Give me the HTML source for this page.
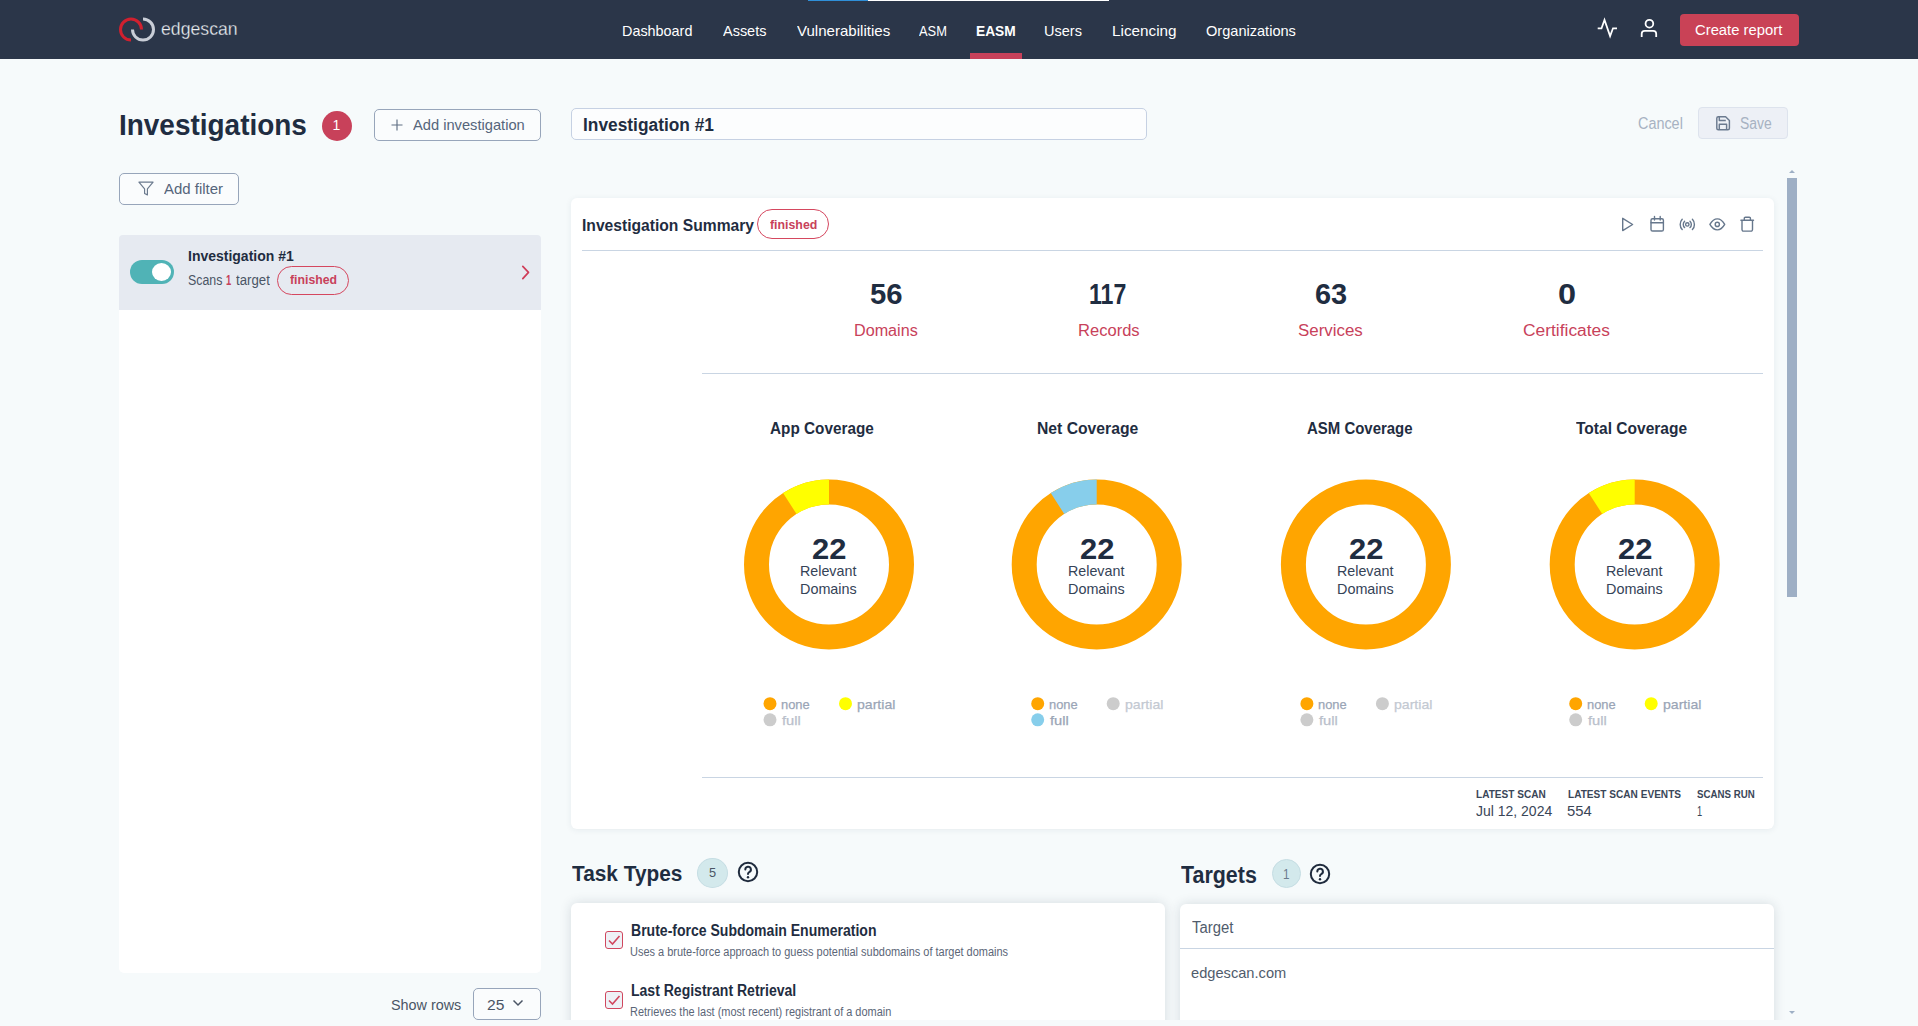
<!DOCTYPE html>
<html><head><meta charset="utf-8"><title>Investigations</title>
<style>
*{box-sizing:border-box;margin:0;padding:0}
html,body{width:1918px;height:1026px;overflow:hidden;background:#f6fafb;font-family:"Liberation Sans",sans-serif}
.a{position:absolute}
.t{position:absolute;white-space:nowrap;transform-origin:0 0;font-family:"Liberation Sans",sans-serif}
svg{position:absolute;overflow:visible}
</style></head><body>
<!-- header -->
<div class="a" style="left:0;top:0;width:1918px;height:59px;background:#2b3649"></div>
<div class="a" style="left:808px;top:0;width:60px;height:1px;background:#2f8fd8"></div>
<div class="a" style="left:868px;top:0;width:241px;height:1px;background:#ffffff"></div>
<div class="a" style="left:970px;top:53px;width:52px;height:6px;background:#c8415a"></div>
<svg style="left:0;top:0" width="200" height="59">
  <path d="M131 40.1 A10.5 10.5 0 1 1 141.5 29.6" fill="none" stroke="#d0202f" stroke-width="3"/>
  <path d="M143 19.1 A10.5 10.5 0 1 1 132.5 29.6" fill="none" stroke="#c9ced7" stroke-width="3"/>
</svg>
<svg style="left:0;top:0" width="1918" height="59">
  <polyline points="1597.7 28.3 1601.5 28.3 1604.5 19.9 1610.1 36.1 1613 28.3 1617 28.3" fill="none" stroke="#fff" stroke-width="1.75" stroke-linejoin="miter" stroke-miterlimit="6"/>
  <circle cx="1649.4" cy="23.7" r="3.85" fill="none" stroke="#fff" stroke-width="1.8"/>
  <path d="M1641.7 37V33.8a3 3 0 0 1 3-3H1653.2a3 3 0 0 1 3 3V37" fill="none" stroke="#fff" stroke-width="1.8"/>
</svg>
<div class="a" style="left:1680px;top:14px;width:119px;height:32px;background:#c94256;border-radius:4px"></div>

<!-- left column -->
<div class="a" style="left:322px;top:111px;width:30px;height:30px;border-radius:50%;background:#c8415a"></div>
<div class="a" style="left:374px;top:109px;width:167px;height:32px;border:1px solid #97a5ba;border-radius:5px;background:#fafcfd"></div>
<svg style="left:391px;top:119px" width="12" height="12"><path d="M6 0.5V11.5M0.5 6H11.5" stroke="#5f6e84" stroke-width="1.15"/></svg>
<div class="a" style="left:119px;top:173px;width:120px;height:32px;border:1px solid #97a5ba;border-radius:5px;background:#fafcfd"></div>
<svg style="left:136.7px;top:180px" width="18" height="17" viewBox="0 0 24 24"><polygon points="22 3 2 3 10 12.46 10 19 14 21 14 12.46 22 3" fill="none" stroke="#6b7a8e" stroke-width="1.65" stroke-linejoin="round"/></svg>
<div class="a" style="left:119px;top:310px;width:422px;height:663px;background:#fff;border-radius:0 0 5px 5px"></div>
<div class="a" style="left:119px;top:235px;width:422px;height:75px;background:#e6eaf1;border-radius:4px 4px 0 0"></div>
<div class="a" style="left:130px;top:260px;width:44px;height:24px;border-radius:12px;background:#50b3b6"></div>
<div class="a" style="left:152px;top:263px;width:19px;height:18px;border-radius:50%;background:#fff"></div>
<div class="a" style="left:277px;top:266px;width:72px;height:29px;border:1px solid #d5475f;border-radius:15px"></div>
<svg style="left:519px;top:264px" width="14" height="18"><polyline points="3.8 2.4 9.5 8.4 3.8 14.6" fill="none" stroke="#cf3d59" stroke-width="1.7" stroke-linecap="round" stroke-linejoin="round"/></svg>
<div class="a" style="left:473px;top:988px;width:68px;height:32px;border:1px solid #97a5ba;border-radius:5px;background:#fafcfd"></div>
<svg style="left:512px;top:998px" width="14" height="12"><polyline points="1.5 2.5 6 7 10.5 2.5" fill="none" stroke="#4a5565" stroke-width="1.5"/></svg>

<!-- right top -->
<div class="a" style="left:571px;top:108px;width:576px;height:32px;border:1px solid #c6d1e3;border-radius:5px;background:#fcfdfe"></div>
<div class="a" style="left:1698px;top:107px;width:90px;height:32px;border:1px solid #dde3ed;border-radius:4px;background:#edf0f6"></div>
<svg style="left:0;top:0" width="1918" height="150"><g fill="none" stroke="#6b7a8f" stroke-width="1.45" stroke-linejoin="round"><path d="M1716.8 118.3a1.5 1.5 0 0 1 1.5-1.5H1725.6L1729.4 120.6V128.2a1.5 1.5 0 0 1-1.5 1.5H1718.3a1.5 1.5 0 0 1-1.5-1.5Z"/><path d="M1719.3 116.8V120.4H1725.8M1719.3 129.7V124.3H1726.6V129.7"/></g></svg>
<!-- scrollbar -->
<div class="a" style="left:1787px;top:178px;width:10px;height:419px;background:#9eafc5"></div>
<svg style="left:1786px;top:168px" width="12" height="6"><polygon points="3 4.9 6 1.9 9 4.9" fill="#9eafc5"/></svg>
<svg style="left:1786px;top:1009px" width="12" height="6"><polygon points="3 2 6 5 9 2" fill="#9eafc5"/></svg>

<!-- summary card -->
<div class="a" style="left:571px;top:198px;width:1203px;height:631px;background:#fff;border-radius:6px;box-shadow:0 1px 6px rgba(40,60,90,0.08)"></div>
<div class="a" style="left:757px;top:209px;width:72px;height:30px;border:1px solid #d5475f;border-radius:15px"></div>
<div class="a" style="left:582px;top:250px;width:1181px;height:1px;background:#c9d5e3"></div>
<svg style="left:0;top:0" width="1918" height="300">
  <g fill="none" stroke="#66778c" stroke-width="1.4" stroke-linecap="round" stroke-linejoin="round">
    <path d="M1622.7 218.3V230.6L1632.6 224.5Z"/>
    <rect x="1651" y="218.7" width="12.4" height="12.3" rx="1.6"/><path d="M1651 222.8H1663.4M1654.5 216.5V220M1660.2 216.5V220"/>
    <circle cx="1687.3" cy="224.4" r="1.7"/>
    <path d="M1684.6 221.2A4.5 4.5 0 0 0 1684.6 227.6M1690 221.2A4.5 4.5 0 0 1 1690 227.6M1682.2 219.3A7.5 7.5 0 0 0 1682.2 229.5M1692.4 219.3A7.5 7.5 0 0 1 1692.4 229.5"/>
    <path d="M1709.9 224.4C1712 220.8 1714.5 218.9 1717.3 218.9C1720.1 218.9 1722.6 220.8 1724.7 224.4C1722.6 228 1720.1 229.9 1717.3 229.9C1714.5 229.9 1712 228 1709.9 224.4Z"/>
    <circle cx="1717.3" cy="224.4" r="2.1"/>
    <path d="M1740.9 220.2H1753.5M1744.3 220.2V218.3a1.1 1.1 0 0 1 1.1-1.1H1749.3a1.1 1.1 0 0 1 1.1 1.1V220.2M1742 220.2V229.6a1.5 1.5 0 0 0 1.5 1.5H1751a1.5 1.5 0 0 0 1.5-1.5V220.2"/>
  </g>
</svg>
<div class="a" style="left:702px;top:373px;width:1061px;height:1px;background:#c9d5e3"></div>
<svg style="left:0;top:0" width="1918" height="1026">
  <g fill="none" stroke-width="25">
    <circle cx="829" cy="564.5" r="72.5" stroke="#ffa500"/>
    <path d="M789.81 503.51 A72.5 72.5 0 0 1 829 492" stroke="#ffff00"/>
    <circle cx="1096.7" cy="564.5" r="72.5" stroke="#ffa500"/>
    <path d="M1057.51 503.51 A72.5 72.5 0 0 1 1096.7 492" stroke="#87ceeb"/>
    <circle cx="1365.9" cy="564.5" r="72.5" stroke="#ffa500"/>
    <circle cx="1634.7" cy="564.5" r="72.5" stroke="#ffa500"/>
    <path d="M1595.51 503.51 A72.5 72.5 0 0 1 1634.7 492" stroke="#ffff00"/>
  </g>
  <g>
    <circle cx="770" cy="703.7" r="6.5" fill="#ffa500"/><circle cx="845.5" cy="703.7" r="6.5" fill="#ffff00"/><circle cx="770" cy="719.8" r="6.5" fill="#cccccc"/>
    <circle cx="1037.7" cy="703.7" r="6.5" fill="#ffa500"/><circle cx="1113.2" cy="703.7" r="6.5" fill="#cccccc"/><circle cx="1037.7" cy="719.8" r="6.5" fill="#87ceeb"/>
    <circle cx="1306.9" cy="703.7" r="6.5" fill="#ffa500"/><circle cx="1382.4" cy="703.7" r="6.5" fill="#cccccc"/><circle cx="1306.9" cy="719.8" r="6.5" fill="#cccccc"/>
    <circle cx="1575.7" cy="703.7" r="6.5" fill="#ffa500"/><circle cx="1651.2" cy="703.7" r="6.5" fill="#ffff00"/><circle cx="1575.7" cy="719.8" r="6.5" fill="#cccccc"/>
  </g>
</svg>
<div class="a" style="left:702px;top:777px;width:1061px;height:1px;background:#c9d5e3"></div>

<!-- task types / targets -->
<div class="a" style="left:697px;top:858px;width:31px;height:30px;border-radius:50%;background:#d3e9ec;border:1px solid #c5dde3"></div>
<svg style="left:736px;top:860px" width="24" height="24" viewBox="0 0 24 24"><g fill="none" stroke="#1f2b3d" stroke-width="2" stroke-linecap="round"><circle cx="12" cy="12" r="9.2"/><path d="M9.3 9.5a2.8 2.8 0 1 1 3.9 2.6c-.8.4-1.2 1-1.2 1.9"/><path d="M12 17.2v.1" stroke-width="2.4"/></g></svg>
<div class="a" style="left:1272px;top:859px;width:29px;height:29px;border-radius:50%;background:#d3e9ec;border:1px solid #c5dde3"></div>
<svg style="left:1308px;top:862px" width="24" height="24" viewBox="0 0 24 24"><g fill="none" stroke="#1f2b3d" stroke-width="2" stroke-linecap="round"><circle cx="12" cy="12" r="9.2"/><path d="M9.3 9.5a2.8 2.8 0 1 1 3.9 2.6c-.8.4-1.2 1-1.2 1.9"/><path d="M12 17.2v.1" stroke-width="2.4"/></g></svg>
<div class="a" style="left:571px;top:903px;width:594px;height:200px;background:#fff;border-radius:6px;box-shadow:0 0 12px rgba(30,45,70,0.15)"></div>
<div class="a" style="left:1180px;top:904px;width:594px;height:200px;background:#fff;border-radius:6px;box-shadow:0 0 12px rgba(30,45,70,0.15)"></div>
<div class="a" style="left:605px;top:931px;width:18px;height:18px;border:1.5px solid #d0475e;border-radius:3px;background:#eef1f6"></div>
<svg style="left:605px;top:931px" width="18" height="18"><polyline points="4 9.5 7.5 13 14.5 5" fill="none" stroke="#d0475e" stroke-width="1.6"/></svg>
<div class="a" style="left:605px;top:991px;width:18px;height:18px;border:1.5px solid #d0475e;border-radius:3px;background:#eef1f6"></div>
<svg style="left:605px;top:991px" width="18" height="18"><polyline points="4 9.5 7.5 13 14.5 5" fill="none" stroke="#d0475e" stroke-width="1.6"/></svg>
<div class="a" style="left:1180px;top:948px;width:594px;height:1px;background:#c9d5e3"></div>

<div class=t style="left:621.94px;top:23.00px;font-size:15px;line-height:15px;font-weight:400;color:#ffffff;transform:scaleX(0.9597);">Dashboard</div>
<div class=t style="left:722.60px;top:23.00px;font-size:15px;line-height:15px;font-weight:400;color:#ffffff;transform:scaleX(0.9644);">Assets</div>
<div class=t style="left:796.60px;top:23.00px;font-size:15px;line-height:15px;font-weight:400;color:#ffffff;transform:scaleX(1.0043);">Vulnerabilities</div>
<div class=t style="left:919.40px;top:23.00px;font-size:15px;line-height:15px;font-weight:400;color:#ffffff;transform:scaleX(0.8581);">ASM</div>
<div class=t style="left:976.09px;top:23.00px;font-size:15px;line-height:15px;font-weight:700;color:#ffffff;transform:scaleX(0.9146);">EASM</div>
<div class=t style="left:1044.33px;top:23.00px;font-size:15px;line-height:15px;font-weight:400;color:#ffffff;transform:scaleX(0.9684);">Users</div>
<div class=t style="left:1111.88px;top:23.00px;font-size:15px;line-height:15px;font-weight:400;color:#ffffff;transform:scaleX(1.0177);">Licencing</div>
<div class=t style="left:1205.63px;top:23.00px;font-size:15px;line-height:15px;font-weight:400;color:#ffffff;transform:scaleX(0.9714);">Organizations</div>
<div class=t style="left:1695.04px;top:22.00px;font-size:15.5px;line-height:15.5px;font-weight:400;color:#ffffff;transform:scaleX(0.9556);">Create report</div>
<div class=t style="left:160.73px;top:20.00px;font-size:18.2px;line-height:18.2px;font-weight:400;color:#eef0f4;transform:scaleX(0.9714);-webkit-text-stroke:0.3px #2b3649;">edgescan</div>
<div class=t style="left:118.67px;top:111.00px;font-size:29px;line-height:29px;font-weight:700;color:#1f2d41;transform:scaleX(0.9635);">Investigations</div>
<div class=t style="left:332.50px;top:118.00px;font-size:14px;line-height:14px;font-weight:400;color:#ffffff;transform:scaleX(1.0000);">1</div>
<div class=t style="left:413.00px;top:117.00px;font-size:15px;line-height:15px;font-weight:400;color:#55657b;transform:scaleX(0.9781);">Add investigation</div>
<div class=t style="left:164.00px;top:181.00px;font-size:15.3px;line-height:15.3px;font-weight:400;color:#55657b;transform:scaleX(0.9767);">Add filter</div>
<div class=t style="left:188.10px;top:248.00px;font-size:15.5px;line-height:15.5px;font-weight:700;color:#1f2d41;transform:scaleX(0.9026);">Investigation #1</div>
<div class=t style="left:188.12px;top:273.00px;font-size:14px;line-height:14px;font-weight:400;color:#4a5565;transform:scaleX(0.8842);">Scans</div>
<div class=t style="left:226.13px;top:273.00px;font-size:14px;line-height:14px;font-weight:700;color:#c8415a;transform:scaleX(0.6714);">1</div>
<div class=t style="left:235.50px;top:273.00px;font-size:14px;line-height:14px;font-weight:400;color:#4a5565;transform:scaleX(0.9444);">target</div>
<div class=t style="left:290.20px;top:273.00px;font-size:13px;line-height:13px;font-weight:700;color:#c8415a;transform:scaleX(0.9429);">finished</div>
<div class=t style="left:391.04px;top:997.00px;font-size:15px;line-height:15px;font-weight:400;color:#4a5565;transform:scaleX(0.9583);">Show rows</div>
<div class=t style="left:487.36px;top:997.00px;font-size:15px;line-height:15px;font-weight:400;color:#4a5565;transform:scaleX(1.0400);">25</div>
<div class=t style="left:583.01px;top:117.00px;font-size:17.5px;line-height:17.5px;font-weight:700;color:#1f2d41;transform:scaleX(0.9905);">Investigation #1</div>
<div class=t style="left:1637.80px;top:116.00px;font-size:16px;line-height:16px;font-weight:400;color:#a7b2c2;transform:scaleX(0.9000);">Cancel</div>
<div class=t style="left:1739.83px;top:116.00px;font-size:16px;line-height:16px;font-weight:400;color:#a7b2c2;transform:scaleX(0.8714);">Save</div>
<div class=t style="left:581.72px;top:218.00px;font-size:16px;line-height:16px;font-weight:700;color:#1f2d41;transform:scaleX(0.9771);">Investigation Summary</div>
<div class=t style="left:770.00px;top:218.00px;font-size:13px;line-height:13px;font-weight:700;color:#c8415a;transform:scaleX(0.9490);">finished</div>
<div class=t style="left:870.01px;top:279.00px;font-size:29.5px;line-height:29.5px;font-weight:700;color:#1f2d41;transform:scaleX(0.9935);">56</div>
<div class=t style="left:854.29px;top:323.00px;font-size:16px;line-height:16px;font-weight:400;color:#c8415a;transform:scaleX(1.0097);">Domains</div>
<div class=t style="left:1089.43px;top:279.00px;font-size:29.5px;line-height:29.5px;font-weight:700;color:#1f2d41;transform:scaleX(0.7844);">117</div>
<div class=t style="left:1077.97px;top:323.00px;font-size:16px;line-height:16px;font-weight:400;color:#c8415a;transform:scaleX(1.0345);">Records</div>
<div class=t style="left:1314.62px;top:279.00px;font-size:29.5px;line-height:29.5px;font-weight:700;color:#1f2d41;transform:scaleX(0.9806);">63</div>
<div class=t style="left:1298.14px;top:323.00px;font-size:16px;line-height:16px;font-weight:400;color:#c8415a;transform:scaleX(1.0550);">Services</div>
<div class=t style="left:1557.70px;top:279.00px;font-size:29.5px;line-height:29.5px;font-weight:700;color:#1f2d41;transform:scaleX(1.1000);">0</div>
<div class=t style="left:1522.51px;top:323.00px;font-size:16px;line-height:16px;font-weight:400;color:#c8415a;transform:scaleX(1.0861);">Certificates</div>
<div class=t style="left:769.70px;top:421.00px;font-size:16px;line-height:16px;font-weight:700;color:#1f2d41;transform:scaleX(0.9565);">App Coverage</div>
<div class=t style="left:1037.22px;top:421.00px;font-size:16px;line-height:16px;font-weight:700;color:#1f2d41;transform:scaleX(0.9814);">Net Coverage</div>
<div class=t style="left:1307.40px;top:421.00px;font-size:16px;line-height:16px;font-weight:700;color:#1f2d41;transform:scaleX(0.9345);">ASM Coverage</div>
<div class=t style="left:1575.90px;top:421.00px;font-size:16px;line-height:16px;font-weight:700;color:#1f2d41;transform:scaleX(0.9711);">Total Coverage</div>
<div class=t style="left:811.93px;top:535.00px;font-size:29px;line-height:29px;font-weight:700;color:#1f2d41;transform:scaleX(1.0667);">22</div>
<div class=t style="left:800.15px;top:563.00px;font-size:15px;line-height:15px;font-weight:400;color:#354357;transform:scaleX(0.9517);">Relevant</div>
<div class=t style="left:800.14px;top:581.00px;font-size:15px;line-height:15px;font-weight:400;color:#354357;transform:scaleX(0.9586);">Domains</div>
<div class=t style="left:781.34px;top:698.00px;font-size:13.5px;line-height:13.5px;font-weight:400;color:#9aa5b6;transform:scaleX(0.9552);-webkit-text-stroke:0.25px #9aa5b6;">none</div>
<div class=t style="left:857.16px;top:698.00px;font-size:13.5px;line-height:13.5px;font-weight:400;color:#9aa5b6;transform:scaleX(1.0429);-webkit-text-stroke:0.25px #9aa5b6;">partial</div>
<div class=t style="left:782.00px;top:714.00px;font-size:13.5px;line-height:13.5px;font-weight:400;color:#b9c0cb;transform:scaleX(1.0882);-webkit-text-stroke:0.25px #b9c0cb;">full</div>
<div class=t style="left:1079.63px;top:535.00px;font-size:29px;line-height:29px;font-weight:700;color:#1f2d41;transform:scaleX(1.0667);">22</div>
<div class=t style="left:1067.85px;top:563.00px;font-size:15px;line-height:15px;font-weight:400;color:#354357;transform:scaleX(0.9517);">Relevant</div>
<div class=t style="left:1067.84px;top:581.00px;font-size:15px;line-height:15px;font-weight:400;color:#354357;transform:scaleX(0.9586);">Domains</div>
<div class=t style="left:1049.04px;top:698.00px;font-size:13.5px;line-height:13.5px;font-weight:400;color:#9aa5b6;transform:scaleX(0.9552);-webkit-text-stroke:0.25px #9aa5b6;">none</div>
<div class=t style="left:1124.86px;top:698.00px;font-size:13.5px;line-height:13.5px;font-weight:400;color:#c3c9d2;transform:scaleX(1.0429);-webkit-text-stroke:0.25px #c3c9d2;">partial</div>
<div class=t style="left:1049.70px;top:714.00px;font-size:13.5px;line-height:13.5px;font-weight:400;color:#9aa5b6;transform:scaleX(1.0882);-webkit-text-stroke:0.25px #9aa5b6;">full</div>
<div class=t style="left:1348.83px;top:535.00px;font-size:29px;line-height:29px;font-weight:700;color:#1f2d41;transform:scaleX(1.0667);">22</div>
<div class=t style="left:1337.05px;top:563.00px;font-size:15px;line-height:15px;font-weight:400;color:#354357;transform:scaleX(0.9517);">Relevant</div>
<div class=t style="left:1337.04px;top:581.00px;font-size:15px;line-height:15px;font-weight:400;color:#354357;transform:scaleX(0.9586);">Domains</div>
<div class=t style="left:1318.24px;top:698.00px;font-size:13.5px;line-height:13.5px;font-weight:400;color:#9aa5b6;transform:scaleX(0.9552);-webkit-text-stroke:0.25px #9aa5b6;">none</div>
<div class=t style="left:1394.06px;top:698.00px;font-size:13.5px;line-height:13.5px;font-weight:400;color:#c3c9d2;transform:scaleX(1.0429);-webkit-text-stroke:0.25px #c3c9d2;">partial</div>
<div class=t style="left:1318.90px;top:714.00px;font-size:13.5px;line-height:13.5px;font-weight:400;color:#b9c0cb;transform:scaleX(1.0882);-webkit-text-stroke:0.25px #b9c0cb;">full</div>
<div class=t style="left:1617.63px;top:535.00px;font-size:29px;line-height:29px;font-weight:700;color:#1f2d41;transform:scaleX(1.0667);">22</div>
<div class=t style="left:1605.85px;top:563.00px;font-size:15px;line-height:15px;font-weight:400;color:#354357;transform:scaleX(0.9517);">Relevant</div>
<div class=t style="left:1605.84px;top:581.00px;font-size:15px;line-height:15px;font-weight:400;color:#354357;transform:scaleX(0.9586);">Domains</div>
<div class=t style="left:1587.04px;top:698.00px;font-size:13.5px;line-height:13.5px;font-weight:400;color:#9aa5b6;transform:scaleX(0.9552);-webkit-text-stroke:0.25px #9aa5b6;">none</div>
<div class=t style="left:1662.86px;top:698.00px;font-size:13.5px;line-height:13.5px;font-weight:400;color:#9aa5b6;transform:scaleX(1.0429);-webkit-text-stroke:0.25px #9aa5b6;">partial</div>
<div class=t style="left:1587.70px;top:714.00px;font-size:13.5px;line-height:13.5px;font-weight:400;color:#b9c0cb;transform:scaleX(1.0882);-webkit-text-stroke:0.25px #b9c0cb;">full</div>
<div class=t style="left:1476.29px;top:789.00px;font-size:11px;line-height:11px;font-weight:700;color:#3a4658;transform:scaleX(0.9147);">LATEST SCAN</div>
<div class=t style="left:1568.08px;top:789.00px;font-size:11px;line-height:11px;font-weight:700;color:#3a4658;transform:scaleX(0.9172);">LATEST SCAN EVENTS</div>
<div class=t style="left:1697.30px;top:789.00px;font-size:11px;line-height:11px;font-weight:700;color:#3a4658;transform:scaleX(0.8815);">SCANS RUN</div>
<div class=t style="left:1476.40px;top:804.00px;font-size:14.5px;line-height:14.5px;font-weight:400;color:#3a4658;transform:scaleX(0.9646);">Jul 12, 2024</div>
<div class=t style="left:1567.18px;top:804.00px;font-size:14.5px;line-height:14.5px;font-weight:400;color:#3a4658;transform:scaleX(1.0217);">554</div>
<div class=t style="left:1696.86px;top:804.00px;font-size:14.5px;line-height:14.5px;font-weight:400;color:#3a4658;transform:scaleX(0.6429);">1</div>
<div class=t style="left:572.00px;top:863.00px;font-size:22px;line-height:22px;font-weight:700;color:#1f2d41;transform:scaleX(0.9466);">Task Types</div>
<div class=t style="left:708.52px;top:866.00px;font-size:13px;line-height:13px;font-weight:400;color:#4a5565;transform:scaleX(0.9833);">5</div>
<div class=t style="left:1180.50px;top:864.00px;font-size:23px;line-height:23px;font-weight:700;color:#1f2d41;transform:scaleX(0.9321);">Targets</div>
<div class=t style="left:1283.17px;top:867.00px;font-size:14px;line-height:14px;font-weight:400;color:#6b7a8c;transform:scaleX(0.8333);">1</div>
<div class=t style="left:630.72px;top:923.00px;font-size:16px;line-height:16px;font-weight:700;color:#1f2d41;transform:scaleX(0.8766);">Brute-force Subdomain Enumeration</div>
<div class=t style="left:630.09px;top:946.00px;font-size:12px;line-height:12px;font-weight:400;color:#5b6677;transform:scaleX(0.9141);">Uses a brute-force approach to guess potential subdomains of target domains</div>
<div class=t style="left:630.72px;top:983.00px;font-size:16px;line-height:16px;font-weight:700;color:#1f2d41;transform:scaleX(0.8765);">Last Registrant Retrieval</div>
<div class=t style="left:630.09px;top:1006.00px;font-size:12px;line-height:12px;font-weight:400;color:#5b6677;transform:scaleX(0.9133);">Retrieves the last (most recent) registrant of a domain</div>
<div class=t style="left:1191.60px;top:920.00px;font-size:15.8px;line-height:15.8px;font-weight:400;color:#505c6c;transform:scaleX(0.9409);">Target</div>
<div class=t style="left:1190.62px;top:965.00px;font-size:15px;line-height:15px;font-weight:400;color:#505c6c;transform:scaleX(0.9760);">edgescan.com</div>

<div class="a" style="left:0;top:1020px;width:1918px;height:6px;background:#f6fafb;z-index:5"></div>
</body></html>
